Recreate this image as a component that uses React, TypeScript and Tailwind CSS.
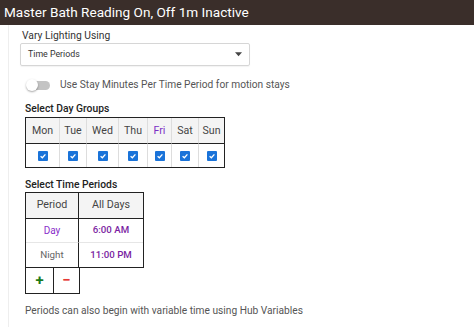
import React from "react";

const days = ["Mon", "Tue", "Wed", "Thu", "Fri", "Sat", "Sun"];
const dayWidths = [33, 27, 32, 29, 24, 27, 26];

function Check() {
  return (
    <span className="inline-flex items-center justify-center w-[10px] h-[10px] rounded-[1px] bg-[#1a73d9]">
      <svg width="8" height="8" viewBox="0 0 10 10">
        <path d="M2 5.2 L4.2 7.2 L8 3" stroke="white" strokeWidth="1.6" fill="none" />
      </svg>
    </span>
  );
}

export default function App() {
  return (
    <div className="w-[474px] h-[327px] bg-white overflow-hidden" style={{ fontFamily: "Roboto, 'Liberation Sans', sans-serif" }}>
      <div className="h-[25px] bg-[#3a2e2a] flex items-center pl-[4px]">
        <span className="text-white text-[13.6px] leading-none">Master Bath Reading On, Off 1m Inactive</span>
      </div>
      <div className="ml-[8px] border-l border-[#eeeeee] h-[302px] pl-[11px]">
        <div className="pt-[5px] text-[10.3px] leading-[12px] text-[#333] pl-[2px]">Vary Lighting Using</div>
        <div className="mt-[1px] w-[230px] h-[23px] border border-[#d6d6d6] rounded-[2px] flex items-center justify-between px-[7px] shadow-[0_1px_1px_rgba(0,0,0,0.05)]">
          <span className="text-[8.8px] text-[#333]">Time Periods</span>
          <svg width="7" height="5" viewBox="0 0 8 5"><path d="M0 0 L8 0 L4 4.5 Z" fill="#444" /></svg>
        </div>
        <div className="mt-[11px] h-[16px] flex items-center">
          <div className="relative w-[24px] h-[14px] ml-[6px] flex items-center">
            <div className="w-[20px] h-[9px] rounded-full bg-[#c4c4c4] ml-[4px]" />
            <div className="absolute left-0 top-[1px] w-[12px] h-[12px] rounded-full bg-white shadow-[0_1px_2px_rgba(0,0,0,0.35)]" />
          </div>
          <span className="ml-[10px] text-[10.2px] text-[#555]">Use Stay Minutes Per Time Period for motion stays</span>
        </div>
        <div className="ml-[5px]">
          <div className="mt-[9px] text-[10.3px] leading-[14px] text-[#222] font-medium">Select Day Groups</div>
          <div className="mt-[1px] inline-grid border-[1.5px] border-[#222]" style={{ gridTemplateColumns: dayWidths.map(w => w + "px").join(" ") }}>
            {days.map((d, i) => (
              <div key={d} className={`h-[26px] flex items-center justify-center text-[10.6px] bg-[#f4f4f4] border-b border-[#222] ${i > 0 ? "border-l border-l-[#ddd]" : ""} ${d === "Fri" ? "text-[#7b2fc4]" : "text-[#444]"}`}>{d}</div>
            ))}
            {days.map((d, i) => (
              <div key={d + "c"} className={`h-[23px] flex items-center justify-center ${i > 0 ? "border-l border-l-[#ddd]" : ""}`}><Check /></div>
            ))}
          </div>
          <div className="mt-[10px] text-[10.3px] leading-[14px] text-[#222] font-medium">Select Time Periods</div>
          <div className="w-[119px] border-[1.5px] border-[#222] grid grid-cols-[53px_64px]">
            <div className="h-[26px] flex items-center justify-center bg-[#f4f4f4] text-[10.7px] text-[#444] border-b border-[#222] border-r border-r-[#222]">Period</div>
            <div className="h-[26px] flex items-center justify-center bg-[#f4f4f4] text-[10.7px] text-[#444] border-b border-[#222]">All Days</div>
            <div className="h-[24px] flex items-center justify-center text-[10px] text-[#8a2ec9] border-b border-[#e6e6e6] border-r border-r-[#222]">Day</div>
            <div className="h-[24px] flex items-center justify-center text-[9.7px] font-medium text-[#7b1fa2] border-b border-[#e6e6e6]">6:00 AM</div>
            <div className="h-[24px] flex items-center justify-center text-[9.8px] text-[#666] border-r border-[#222]">Night</div>
            <div className="h-[24px] flex items-center justify-center text-[9.7px] font-medium text-[#7b1fa2]">11:00 PM</div>
          </div>
          <div className="flex w-[55px] h-[26px] border-[1.5px] border-t-0 border-[#222]">
            <div className="w-[28px] flex items-center justify-center border-r border-[#222] text-[#1b7a1b] text-[15px] font-bold leading-none">+</div>
            <div className="flex-1 flex items-center justify-center text-[#e53935] text-[15px] font-bold leading-none">−</div>
          </div>
          <div className="mt-[10px] text-[10.2px] leading-[14px] text-[#555]">Periods can also begin with variable time using Hub Variables</div>
        </div>
      </div>
    </div>
  );
}
